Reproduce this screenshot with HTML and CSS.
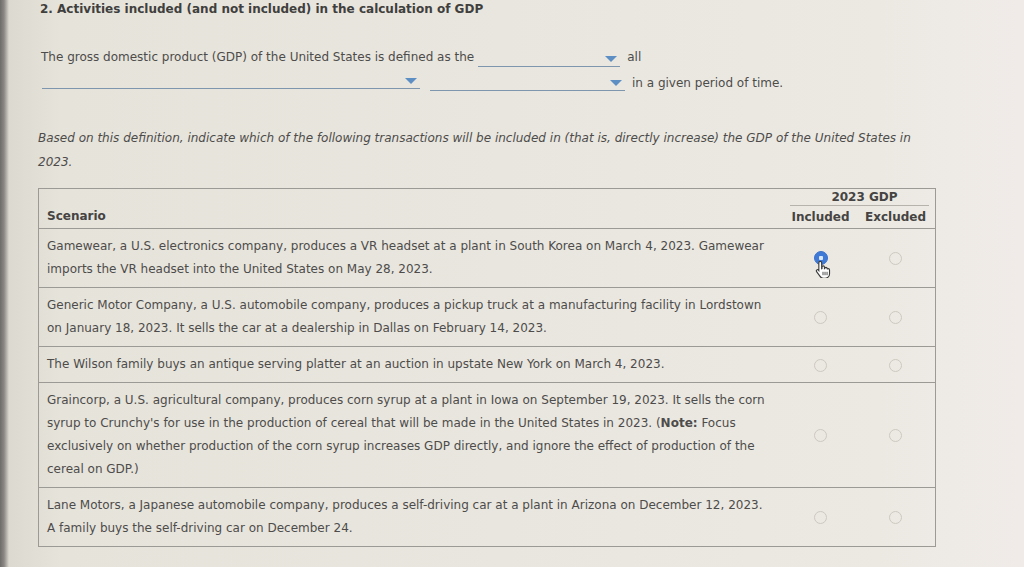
FILE: index.html
```html
<!DOCTYPE html>
<html lang="en">
<head>
<meta charset="utf-8">
<title>Activities included (and not included) in the calculation of GDP</title>
<link rel="stylesheet" href="styles.css">
</head>
<body>
<div class="page">
  <h2 class="title">2. Activities included (and not included) in the calculation of GDP</h2>

  <div class="def-line first">
    <span class="txt">The gross domestic product (GDP) of the United States is defined as the</span>
    <span class="dropdown dd-a"><span class="arrow"></span></span>
    <span class="txt after">all</span>
  </div>
  <div class="def-line second">
    <span class="dropdown dd-b"><span class="arrow"></span></span>
    <span class="dropdown dd-c"><span class="arrow"></span></span>
    <span class="txt after">in a given period of time.</span>
  </div>

  <p class="intro">Based on this definition, indicate which of the following transactions will be included in (that is, directly increase) the GDP of the United States in 2023.</p>

  <table class="gdp">
    <thead>
      <tr>
        <th class="scenario-h" rowspan="2">Scenario</th>
        <th class="group-h" colspan="2"><div class="group-label">2023 GDP</div></th>
      </tr>
      <tr>
        <th class="col-h inc">Included</th>
        <th class="col-h exc">Excluded</th>
      </tr>
    </thead>
    <tbody>
      <tr>
        <td class="scenario">Gamewear, a U.S. electronics company, produces a VR headset at a plant in South Korea on March 4, 2023. Gamewear imports the VR headset into the United States on May 28, 2023.</td>
        <td class="radio-cell inc"><span class="radio selected"></span>
          <svg class="cursor" viewBox="0 0 14 16" width="16" height="18" aria-hidden="true">
            <path d="M4.5 1.2c.8 0 1.3.5 1.3 1.3v5.2l.3-.1V6.3c0-.7.5-1.1 1.1-1.1s1.1.4 1.1 1.1v1.4l.2-.1c0-.6.5-1 1.1-1s1.1.5 1.1 1.1v.6c.2-.4.6-.6 1-.6.6 0 1.1.5 1.1 1.1v3.5c0 2.2-1.6 3.9-3.8 3.9H7.4c-1.3 0-2.3-.6-3-1.6L1.3 10.3c-.4-.5-.3-1.2.2-1.5.5-.4 1.2-.3 1.5.2l.3.4V2.5c0-.8.5-1.3 1.2-1.3z" fill="#fff" stroke="#3a3a3a" stroke-width="1"/>
            <path d="M7 10.5v3M8.8 10.5v3M10.6 10.5v3" stroke="#3a3a3a" stroke-width=".8"/>
          </svg>
        </td>
        <td class="radio-cell exc"><span class="radio"></span></td>
      </tr>
      <tr>
        <td class="scenario">Generic Motor Company, a U.S. automobile company, produces a pickup truck at a manufacturing facility in Lordstown on January 18, 2023. It sells the car at a dealership in Dallas on February 14, 2023.</td>
        <td class="radio-cell inc"><span class="radio"></span></td>
        <td class="radio-cell exc"><span class="radio"></span></td>
      </tr>
      <tr>
        <td class="scenario">The Wilson family buys an antique serving platter at an auction in upstate New York on March 4, 2023.</td>
        <td class="radio-cell inc"><span class="radio"></span></td>
        <td class="radio-cell exc"><span class="radio"></span></td>
      </tr>
      <tr>
        <td class="scenario">Graincorp, a U.S. agricultural company, produces corn syrup at a plant in Iowa on September 19, 2023. It sells the corn syrup to Crunchy's for use in the production of cereal that will be made in the United States in 2023. (<b>Note:</b> Focus exclusively on whether production of the corn syrup increases GDP directly, and ignore the effect of production of the cereal on GDP.)</td>
        <td class="radio-cell inc"><span class="radio"></span></td>
        <td class="radio-cell exc"><span class="radio"></span></td>
      </tr>
      <tr>
        <td class="scenario">Lane Motors, a Japanese automobile company, produces a self-driving car at a plant in Arizona on December 12, 2023. A&nbsp;family buys the self-driving car on December 24.</td>
        <td class="radio-cell inc"><span class="radio"></span></td>
        <td class="radio-cell exc"><span class="radio"></span></td>
      </tr>
    </tbody>
  </table>
</div>
</body>
</html>
```

FILE: styles.css
```css
html, body {
  margin: 0;
  padding: 0;
  height: 100%;
}

body {
  background: linear-gradient(90deg, #6e6c6a 0, #8a8784 4px, #dcd9d1 9px, #e6e3db 60px, #e9e6df 500px, #ece9e3 880px, #f0ebe8 1024px);
  font-family: "DejaVu Sans", Verdana, sans-serif;
  font-size: 12px;
  color: #4d4c4a;
  overflow: hidden;
}

.page {
  padding-left: 38px;
  width: 900px;
}

.title {
  margin: 0 0 0 2px;
  font-size: 12px;
  font-weight: bold;
  color: #403f3d;
  line-height: 18px;
}

.def-line {
  display: flex;
  align-items: flex-start;
}

.def-line.first {
  margin-top: 31px;
  height: 20px;
  padding-left: 3px;
}

.def-line.second {
  margin-top: 6px;
  height: 16px;
  padding-left: 4px;
}

.txt {
  line-height: 16px;
}

.txt.after {
  margin-left: 7px;
}

.dropdown {
  display: inline-block;
  position: relative;
  border-bottom: 1px solid #7f97ae;
}

.dd-a {
  width: 142px;
  height: 17px;
  margin-left: 4px;
}

.dd-b {
  width: 378px;
  height: 13px;
}

.dd-c {
  width: 195px;
  height: 15px;
  margin-left: 10px;
}

.arrow {
  position: absolute;
  right: 3px;
  bottom: 4px;
  width: 0;
  height: 0;
  border-left: 6px solid transparent;
  border-right: 6px solid transparent;
  border-top: 6px solid #5d8fc4;
}

.intro {
  margin: 35px 0 0 0;
  font-style: italic;
  line-height: 24px;
  width: 886px;
  color: #4d4c4a;
}

.gdp {
  margin-top: 14px;
  border-collapse: collapse;
  width: 898px;
  border: 1px solid #9c9a95;
}

.gdp th {
  font-weight: bold;
  color: #454442;
  padding: 0;
}

.scenario-h {
  text-align: left;
  vertical-align: bottom;
  line-height: 16px;
  padding: 0 0 4px 8px !important;
  border-bottom: 1px solid #9c9a95;
}

.group-h {
  padding: 0 6px 0 5px !important;
}

.group-label {
  text-align: center;
  border-bottom: 1px solid #b6b3ad;
  line-height: 16px;
  padding-left: 10px;
}

.col-h {
  line-height: 18px;
  padding: 2px 0 2px 0 !important;
  border-bottom: 1px solid #9c9a95;
  text-align: center;
}

.col-h.inc {
  width: 71px;
}

.col-h.exc {
  width: 79px;
}

.scenario {
  padding: 6px 16px 6px 8px;
  line-height: 23px;
  border-bottom: 1px solid #9c9a95;
  vertical-align: top;
}

.radio-cell {
  position: relative;
  text-align: center;
  vertical-align: middle;
  border-bottom: 1px solid #9c9a95;
}

.radio {
  display: inline-block;
  width: 11px;
  height: 11px;
  border: 1px solid #cdc9c1;
  border-radius: 50%;
  vertical-align: middle;
}

.radio.selected {
  width: 12px;
  height: 12px;
  background: radial-gradient(circle, #dbe8fa 0 2px, #3f7ad6 2.5px);
  border-color: #3a72cc;
}

.cursor {
  position: absolute;
  left: 30px;
  top: calc(50% + 2px);
}
```
